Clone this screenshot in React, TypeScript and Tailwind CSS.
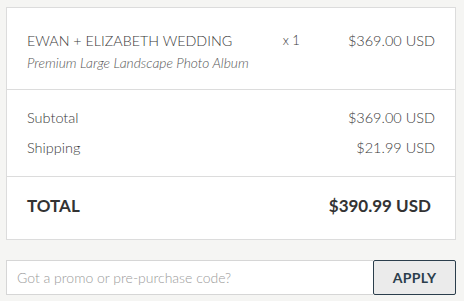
import React from "react";

export default function App() {
  return (
    <div
      className="w-[464px] h-[301px] bg-[#f5f5f3] pt-[7px] px-[6px] text-[#3a3a3a]"
      style={{ fontFamily: "Lato, 'Open Sans', sans-serif" }}
    >
      <div className="w-[450px] bg-white border border-[#dcdcdc]">
        <div className="px-[20px] pt-[22px] pb-[16px] border-b border-[#dcdcdc]">
          <div className="flex items-center h-[22px] text-[14.3px] font-light whitespace-nowrap">
            <span className="flex-1">EWAN + ELIZABETH WEDDING</span>
            <span className="mr-[48px] text-[13px]">x 1</span>
            <span className="text-[14.5px] text-right">$369.00 USD</span>
          </div>
          <div className="h-[21px] leading-[21px] text-[13.8px] italic font-light text-[#555]">
            Premium Large Landscape Photo Album
          </div>
        </div>
        <div className="px-[20px] pt-[13px] pb-[13px] border-b border-[#dcdcdc] text-[14.5px] font-light">
          <div className="flex justify-between items-center h-[30px]">
            <span>Subtotal</span>
            <span>$369.00 USD</span>
          </div>
          <div className="flex justify-between items-center h-[30px]">
            <span>Shipping</span>
            <span>$21.99 USD</span>
          </div>
        </div>
        <div className="pl-[20px] pr-[24px] flex justify-between items-center h-[62px] pb-[4px] text-[17px] font-bold text-[#333]">
          <span>TOTAL</span>
          <span>$390.99 USD</span>
        </div>
      </div>
      <div className="mt-[20px] flex h-[35px] w-[450px]">
        <div className="flex-1 bg-white border border-[#d6d6d6] border-r-0 flex items-center pl-[10px] text-[14px] font-light text-[#9a9a9a]">
          Got a promo or pre-purchase code?
        </div>
        <button className="w-[83px] h-[35px] bg-[#ebebeb] border border-[#2b3e4c] rounded-[2px] text-[#2b3e4c] text-[14px] font-bold tracking-[0.3px]">
          APPLY
        </button>
      </div>
    </div>
  );
}
